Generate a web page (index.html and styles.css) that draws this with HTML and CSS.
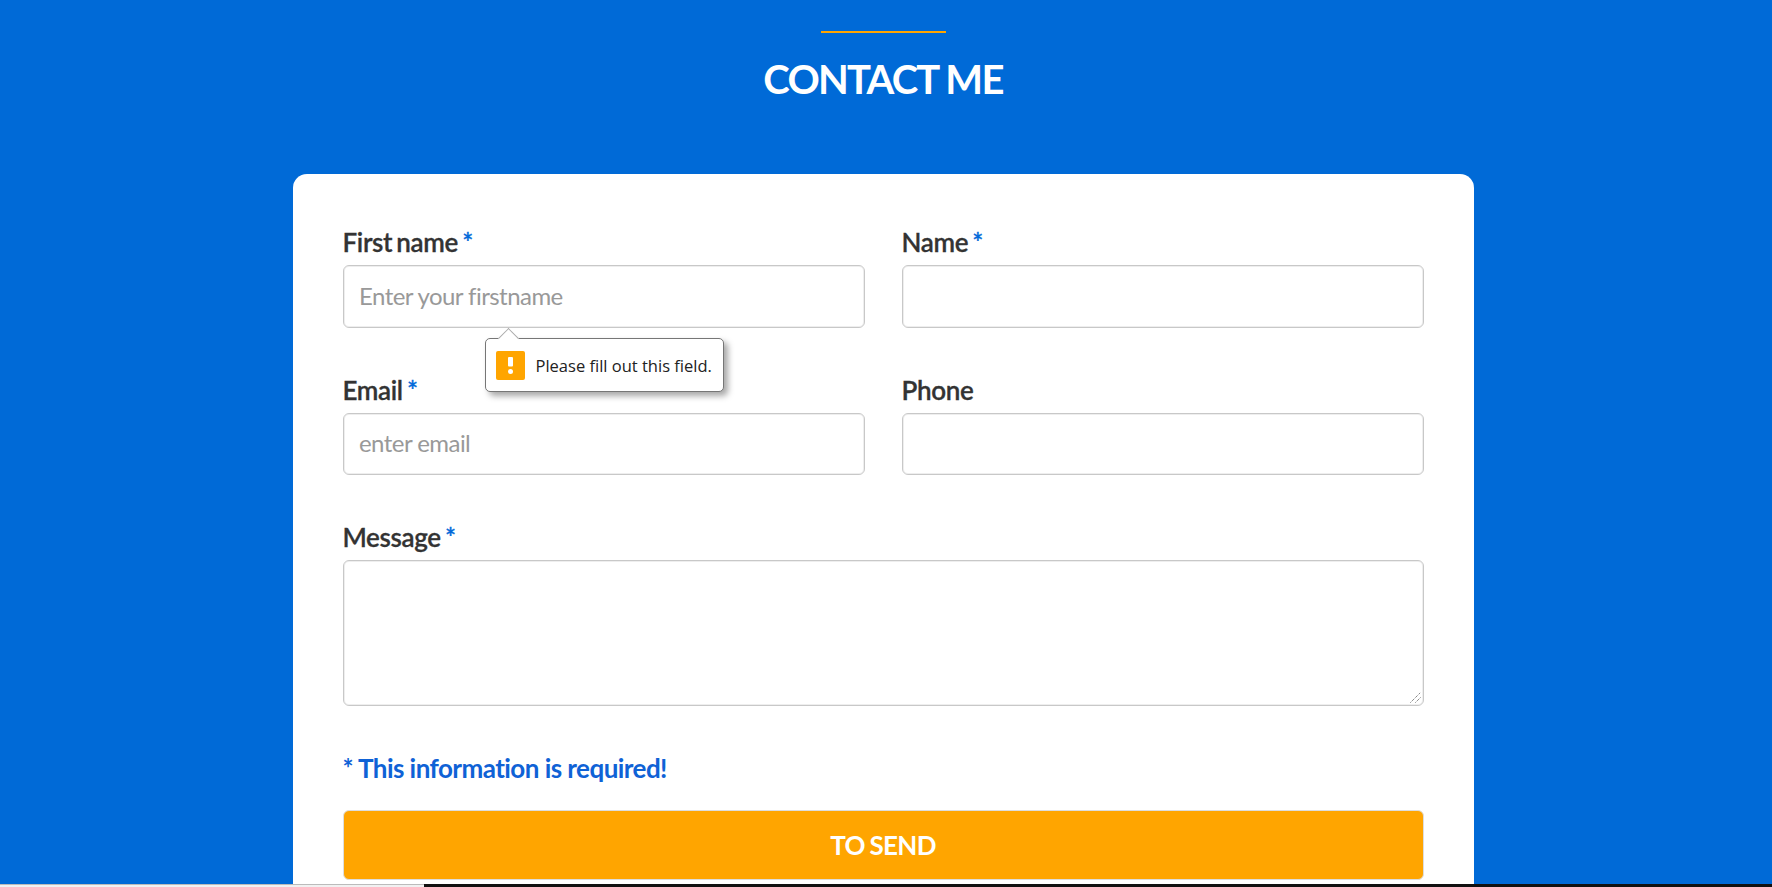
FILE: index.html
```html
<!DOCTYPE html>
<html lang="en">
<head>
<meta charset="utf-8">
<title>Contact me</title>
<link rel="stylesheet" href="styles.css">
</head>
<body>
<section class="contact">
  <header class="contact-head">
    <span class="rule"></span>
    <h2 class="title">CONTACT ME</h2>
  </header>
  <form class="card">
    <div class="grid">
      <div class="field">
        <label class="label" for="first">First name <span class="req">*</span></label>
        <input class="input" id="first" type="text" placeholder="Enter your firstname">
        <div class="bubble">
          <span class="bubble-arrow"></span>
          <span class="bubble-icon">
            <svg viewBox="0 0 29 29" width="29" height="29"><rect x="12" y="6" width="5" height="9.5" rx="1" fill="#fff"/><circle cx="14.5" cy="20.5" r="2.5" fill="#fff"/></svg>
          </span>
          <span class="bubble-text">Please fill out this field.</span>
        </div>
      </div>
      <div class="field">
        <label class="label" for="name">Name <span class="req">*</span></label>
        <input class="input" id="name" type="text">
      </div>
      <div class="field">
        <label class="label" for="email">Email <span class="req">*</span></label>
        <input class="input" id="email" type="email" placeholder="enter email">
      </div>
      <div class="field">
        <label class="label" for="phone">Phone</label>
        <input class="input" id="phone" type="tel">
      </div>
      <div class="field wide">
        <label class="label" for="msg">Message <span class="req">*</span></label>
        <textarea class="input area" id="msg"></textarea>
        <svg class="grip" viewBox="0 0 11 11" width="11" height="11"><path d="M0.5 10.5 L10.5 0.5 M5.5 10.5 L10.5 5.5" stroke="#555" stroke-width="1" stroke-dasharray="1 1" fill="none"/></svg>
      </div>
    </div>
    <p class="note">* This information is required!</p>
    <button class="send" type="button">TO SEND</button>
  </form>
</section>
<div class="edge"><span class="edge-left"></span><span class="edge-right"></span></div>
</body>
</html>
```

FILE: styles.css
```css
* { box-sizing: border-box; }
html, body { margin: 0; height: 100%; overflow: hidden; }
body { background: #006ad7; font-family: "Lato", sans-serif; color: #333; padding-right: 6px; }

.contact { display: flex; flex-direction: column; align-items: center; padding-top: 31px; }
.contact-head { display: flex; flex-direction: column; align-items: center; }
.rule { width: 125px; height: 2px; background: #ffa500; }
.title { margin: 22px 0 0; font-size: 40px; line-height: 48px; font-weight: 700; color: #fff; letter-spacing: -1.75px; }

.card { width: 1181px; margin-top: 71px; padding: 52px 50px 0; background: #fff; border-radius: 14px 14px 0 0; min-height: 720px; }
.grid { display: grid; grid-template-columns: 522px 522px; column-gap: 37px; row-gap: 46px; }
.field { position: relative; display: flex; flex-direction: column; }
.wide { grid-column: 1 / -1; }
.label { font-size: 26px; line-height: 32px; font-weight: 600; color: #333; margin-bottom: 7px; letter-spacing: -0.35px; word-spacing: -2px; -webkit-text-stroke: 0.3px #333; }
.req { color: #0069d9; -webkit-text-stroke: 0.3px #0069d9; }
.input { display: block; width: 100%; height: 62.5px; padding: 0 15.5px 2px; border: 1px solid #c8c8c8; box-shadow: inset 0 0 0 1px #eee; border-radius: 6px; background: #fff; font: 400 24px "Lato", sans-serif; color: #333; outline: none; letter-spacing: -0.55px; }
.input::placeholder { color: #999; opacity: 1; }
.area { height: 146px; resize: none; margin: 0; }
.grip { position: absolute; right: 3px; bottom: 3px; }
.note { margin: 46px 0 0; font-size: 26px; line-height: 32px; font-weight: 700; color: #0f62d6; letter-spacing: -0.55px; }
.send { display: block; width: 100%; height: 70px; margin-top: 26px; border: 1px solid #ddd; border-radius: 6px; background: #ffa500; color: #fff; font: 700 26px "Lato", sans-serif; letter-spacing: -0.7px; word-spacing: -1px; }

.bubble { position: absolute; left: 142px; top: 112px; display: flex; align-items: center; width: 239px; height: 54px; padding-left: 10px; background: #fff; border: 1px solid #767676; border-radius: 5px; box-shadow: 4px 4px 6px rgba(0,0,0,.35); z-index: 2; }
.bubble-arrow { position: absolute; left: 15px; top: -8px; width: 15px; height: 15px; background: #fff; border-left: 1px solid #aaa; border-top: 1px solid #aaa; transform: rotate(45deg); }
.bubble-icon { flex: none; width: 29px; height: 29px; border-radius: 2px; background: #ffa500; display: block; }
.bubble-icon svg { display: block; }
.bubble-text { margin-left: 11px; font: 400 16.5px "Open Sans", sans-serif; color: #222; white-space: nowrap; }

.edge { position: fixed; left: 0; right: 0; bottom: 0; height: 3px; display: flex; }
.edge-left { width: 424px; background: #f1f1f1; border-top: 1px solid #bbb; }
.edge-right { flex: 1; background: #111; }
```
